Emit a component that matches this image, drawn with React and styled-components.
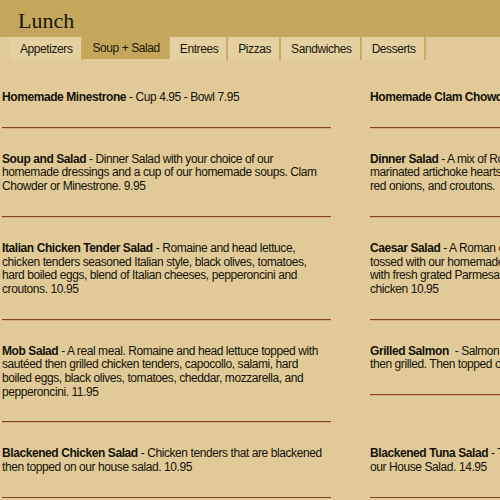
import React from 'react'
import styled, { createGlobalStyle } from 'styled-components'

const GlobalStyle = createGlobalStyle`
  body {
    margin: 0;
    background-color: #e0cb98;
    font-family: "Liberation Sans", Arial, sans-serif;
    color: #161208;
    overflow: hidden;
  }
`

const Header = styled.div`
  height: 37px;
  background-color: #c4a75b;
  padding-left: 18px;
  display: flex;
  align-items: center;
`
const Title = styled.h1`
  margin: 0;
  font-family: "Liberation Serif", "Times New Roman", serif;
  font-weight: normal;
  font-size: 22px;
  color: #1a1408;
  padding-top: 5px;
`
const Tabs = styled.div`
  display: flex;
  padding-left: 10px;
  height: 23px;
`
const Tab = styled.div`
  display: flex;
  align-items: center;
  padding: 0 8px 0 10px;
  font-size: 12px;
  letter-spacing: -0.42px;
  color: #1c1608;
  background-color: ${p => (p.active ? '#c4a75b' : '#e4d1a1')};
  border-right: 2px solid #c9ad64;
  height: ${p => (p.active ? '22px' : '23px')};
  box-sizing: border-box;
`
const Menu = styled.div`
  display: grid;
  grid-template-columns: 329px 329px;
  column-gap: 39px;
  row-gap: 25px;
  align-items: start;
  padding: 31px 0 0 2px;
`
const Item = styled.div`
  font-size: 12px;
  letter-spacing: -0.42px;
  line-height: 13.7px;
  padding: 0 5px 22px 0;
  border-bottom: 1px solid #86441a;
  box-shadow: 0 1px 0 #d9b07a;
`
const Name = styled.b`
  font-weight: bold;
`

const tabs = ['Appetizers', 'Soup + Salad', 'Entrees', 'Pizzas', 'Sandwiches', 'Desserts']

const items = [
  ['Homemade Minestrone', ' - Cup 4.95 - Bowl 7.95'],
  ['Homemade Clam Chowder', ' - Cup 5.95 - Bowl 8.95'],
  ['Soup and Salad', ' - Dinner Salad with your choice of our homemade dressings and a cup of our homemade soups. Clam Chowder or Minestrone. 9.95'],
  ['Dinner Salad', ' - A mix of Romaine and head lettuce, tomatoes, marinated artichoke hearts, cucumbers, black olives, mushrooms, red onions, and croutons.'],
  ['Italian Chicken Tender Salad', ' - Romaine and head lettuce, chicken tenders seasoned Italian style, black olives, tomatoes, hard boiled eggs, blend of Italian cheeses, pepperoncini and croutons. 10.95'],
  ['Caesar Salad', ' - A Roman classic. Crisp chopped Romaine lettuce tossed with our homemade garlic Caesar dressing and topped with fresh grated Parmesan cheese and croutons. Add grilled chicken 10.95'],
  ['Mob Salad', ' - A real meal. Romaine and head lettuce topped with sautéed then grilled chicken tenders, capocollo, salami, hard boiled eggs, black olives, tomatoes, cheddar, mozzarella, and pepperoncini. 11.95'],
  ['Grilled Salmon', '\u00a0 - Salmon fillet seasoned and lightly marinated, then grilled. Then topped on our House Salad. 14.95'],
  ['Blackened Chicken Salad', ' - Chicken tenders that are blackened then topped on our house salad. 10.95'],
  ['Blackened Tuna Salad', ' - Tuna steak blackened then topped on our House Salad. 14.95'],
]

const App = () => {
  return (
    <>
      <GlobalStyle />
      <Header>
        <Title>Lunch</Title>
      </Header>
      <Tabs>
        {tabs.map(t => (
          <Tab key={t} active={t === 'Soup + Salad'}>{t}</Tab>
        ))}
      </Tabs>
      <Menu>
        {items.map(([name, desc]) => (
          <Item key={name}>
            <Name>{name}</Name>{desc}
          </Item>
        ))}
      </Menu>
    </>
  )
}

export default App
